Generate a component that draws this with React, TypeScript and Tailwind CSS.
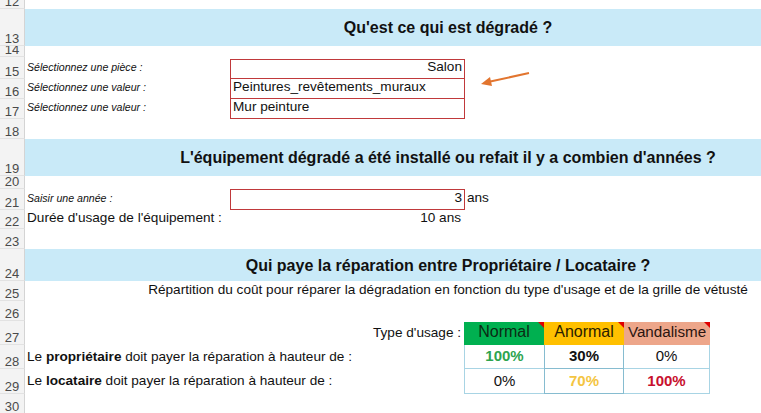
import type { ReactNode } from 'react';

const FONT = "font-['Liberation_Sans',Arial,sans-serif]";

function Row({ n, h, children, band }: { n: number; h: string; children?: ReactNode; band?: boolean }) {
  return (
    <div className={`flex ${h}`}>
      <div className="w-[25px] shrink-0 bg-[#f3f3f3] border-r border-b border-r-[#d4d4d4] border-b-[#e2e2e2] text-[13px] leading-[10px] text-[#4a4a4a] flex items-end justify-center pb-[1px] overflow-hidden">
        {n}
      </div>
      <div className={`flex-1 min-w-0 flex relative ${band ? 'bg-[#c9eaf8] overflow-hidden' : ''}`}>
        {children}
      </div>
    </div>
  );
}

function Band({ children }: { children: ReactNode }) {
  return (
    <div className="w-[846px] shrink-0 flex items-center justify-center text-[16px] font-bold text-[#111] pt-[1px]">
      {children}
    </div>
  );
}

function Corner() {
  return (
    <span className="absolute top-0 right-0 w-0 h-0 border-t-[6px] border-l-[6px] border-t-[#e00000] border-l-transparent" />
  );
}

export default function App() {
  return (
    <div className={`w-[761px] h-[413px] overflow-hidden bg-white ${FONT} text-[#111]`}>
      <Row n={12} h="h-[9px]" />
      <Row n={13} h="h-[37px]" band>
        <Band>Qu'est ce qui est dégradé ?</Band>
      </Row>
      <Row n={14} h="h-[11px]" />

      {/* Sélections */}
      <Row n={15} h="h-[22px]">
        <div className="w-[205px] shrink-0 flex items-end pl-[2px] pb-[3px] text-[10.6px] italic">Sélectionnez une pièce :</div>
        <div className="w-[235px] shrink-0 border border-[#c0393b] mt-[2px] flex items-end justify-end pr-[2px] pb-[1px] text-[13.6px]">Salon</div>
        <svg className="absolute left-[453px] top-[13px]" width="54" height="20" viewBox="0 0 54 20">
          <line x1="51" y1="3" x2="10" y2="12" stroke="#e2752f" strokeWidth="2" />
          <polygon points="3,14 12,7 14,16" fill="#e2752f" />
        </svg>
      </Row>
      <Row n={16} h="h-[20px]">
        <div className="w-[205px] shrink-0 flex items-end pl-[2px] pb-[3px] text-[10.6px] italic">Sélectionnez une valeur :</div>
        <div className="w-[235px] shrink-0 border-x border-b border-[#c0393b] flex items-end pl-[2px] pb-[1px] text-[13.6px]">Peintures_revêtements_muraux</div>
      </Row>
      <Row n={17} h="h-[20px]">
        <div className="w-[205px] shrink-0 flex items-end pl-[2px] pb-[3px] text-[10.6px] italic">Sélectionnez une valeur :</div>
        <div className="w-[235px] shrink-0 border-x border-b border-[#c0393b] flex items-end pl-[2px] pb-[1px] text-[13.6px]">Mur peinture</div>
      </Row>
      <Row n={18} h="h-[20px]" />
      <Row n={19} h="h-[37px]" band>
        <Band>L'équipement dégradé a été installé ou refait il y a combien d'années ?</Band>
      </Row>
      <Row n={20} h="h-[13px]" />

      {/* Année */}
      <Row n={21} h="h-[21px]">
        <div className="w-[205px] shrink-0 flex items-end pl-[2px] pb-[3px] text-[10.6px] italic">Saisir une année :</div>
        <div className="w-[235px] shrink-0 border border-[#c0393b] flex items-end justify-end pr-[2px] pb-[1px] text-[13.6px]">3</div>
        <div className="flex items-end pl-[2px] pb-[2px] text-[13.6px]">ans</div>
      </Row>
      <Row n={22} h="h-[19px]">
        <div className="w-[205px] shrink-0 flex items-end pl-[2px] pb-[1px] text-[13.6px]">Durée d'usage de l'équipement :</div>
        <div className="w-[231px] shrink-0 flex items-end justify-end pb-[1px] text-[13.6px]">10 ans</div>
      </Row>
      <Row n={23} h="h-[20px]" />
      <Row n={24} h="h-[32px]" band>
        <Band>Qui paye la réparation entre Propriétaire / Locataire ?</Band>
      </Row>

      {/* Répartition */}
      <Row n={25} h="h-[20px]">
        <div className="w-[846px] shrink-0 flex items-end justify-center pb-[1px] text-[13.6px]">
          Répartition du coût pour réparer la dégradation en fonction du type d'usage et de la grille de vétusté
        </div>
      </Row>
      <Row n={26} h="h-[20px]" />
      <Row n={27} h="h-[24px]">
        <div className="w-[439px] shrink-0 flex items-end justify-end pr-[3px] pb-[2px] text-[13.6px]">Type d'usage :</div>
        <div className="w-[80px] shrink-0 relative mt-[1px] bg-[#00b050] text-[#0c2a14] text-[16px] flex items-end justify-center pb-[1px]">
          Normal
          <Corner />
        </div>
        <div className="w-[80px] shrink-0 relative mt-[1px] bg-[#ffc000] text-[#2a2000] text-[16px] flex items-end justify-center pb-[1px]">
          Anormal
          <Corner />
        </div>
        <div className="w-[86px] shrink-0 relative mt-[1px] bg-[#eda68a] text-[#2a1410] text-[15.2px] flex items-end justify-center pb-[1px]">
          Vandalisme
          <Corner />
        </div>
      </Row>
      <Row n={28} h="h-[24px]">
        <div className="w-[439px] shrink-0 flex items-end pl-[2px] pb-[2px] text-[13.6px]">
          <span>Le <b>propriétaire</b> doit payer la réparation à hauteur de :</span>
        </div>
        <div className="w-[80px] shrink-0 border-l border-b border-[#a8d4e4] flex items-center justify-center text-[15px] font-bold text-[#2ea44f]">100%</div>
        <div className="w-[80px] shrink-0 border-x border-b border-[#86bcd0] flex items-center justify-center text-[15px] font-bold">30%</div>
        <div className="w-[86px] shrink-0 border-r border-b border-[#a8d4e4] flex items-center justify-center text-[15px]">0%</div>
      </Row>
      <Row n={29} h="h-[25px]">
        <div className="w-[439px] shrink-0 flex items-end pl-[2px] pb-[3px] text-[13.6px]">
          <span>Le <b>locataire</b> doit payer la réparation à hauteur de :</span>
        </div>
        <div className="w-[80px] shrink-0 border-l border-b border-[#a8d4e4] flex items-center justify-center text-[15px]">0%</div>
        <div className="w-[80px] shrink-0 border-x border-b border-[#86bcd0] flex items-center justify-center text-[15px] font-bold text-[#f4c542]">70%</div>
        <div className="w-[86px] shrink-0 border-r border-b border-[#a8d4e4] flex items-center justify-center text-[15px] font-bold text-[#c8102e]">100%</div>
      </Row>
      <Row n={30} h="h-[20px]" />
    </div>
  );
}
